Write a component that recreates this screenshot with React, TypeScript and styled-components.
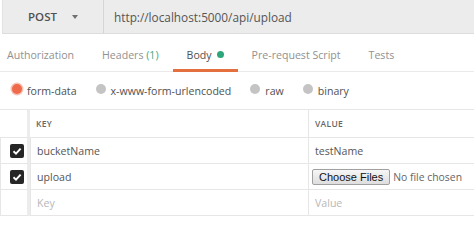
import styled, { createGlobalStyle } from 'styled-components';

const GlobalStyle = createGlobalStyle`
  body {
    margin: 0;
    background: #fff;
    font-family: 'Open Sans', 'Liberation Sans', sans-serif;
  }
`;

const Page = styled.div`
  width: 474px;
  height: 222px;
  overflow: hidden;
  background: #fff;
`;

const TopBar = styled.div`
  display: flex;
  height: 33px;
  margin-left: 2px;
  background: #ececec;
  border-bottom: 1px solid #dcdcdc;
  border-left: 1px solid #e2e2e2;
`;

const MethodSelect = styled.div`
  width: 101px;
  display: flex;
  align-items: center;
  justify-content: center;
  gap: 15px;
  border-right: 1px solid #d6d6d6;
  font-size: 11.5px;
  font-weight: 600;
  color: #505050;
  box-sizing: border-box;
`;

const Caret = styled.span`
  width: 0;
  height: 0;
  border-left: 3.5px solid transparent;
  border-right: 3.5px solid transparent;
  border-top: 4px solid #707070;
`;

const UrlField = styled.div`
  flex: 1;
  display: flex;
  align-items: center;
  padding-left: 10px;
  font-size: 11.8px;
  color: #555;
`;

const Tabs = styled.div`
  display: flex;
  height: 37px;
  margin-left: -7px;
  border-bottom: 1px solid #eaeaea;
`;

const Tab = styled.div<{ $active?: boolean }>`
  display: flex;
  align-items: center;
  gap: 5px;
  padding: 6px 14px 0;
  font-size: 10.6px;
  color: ${(p) => (p.$active ? '#505050' : '#919191')};
  border-bottom: 3px solid ${(p) => (p.$active ? '#e4703f' : 'transparent')};
  margin-bottom: -1px;
`;

const Count = styled.span`
  color: #45a783;
`;

const Dot = styled.span`
  width: 7px;
  height: 7px;
  border-radius: 50%;
  background: #2fa57c;
`;

const BodyTypes = styled.div`
  display: flex;
  align-items: center;
  height: 37px;
  padding-left: 12px;
  gap: 19px;
  border-bottom: 1px solid #e6e6e6;
`;

const Radio = styled.label<{ $checked?: boolean }>`
  display: flex;
  align-items: center;
  gap: 5px;
  font-size: 10.6px;
  color: #505050;

  &::before {
    content: '';
    width: 10px;
    height: 10px;
    border-radius: 50%;
    margin-bottom: 3px;
    background: ${(p) => (p.$checked ? '#ef6a4a' : '#c4c4c4')};
    box-shadow: ${(p) => (p.$checked ? '0 0 0 1.5px #f6c2b4' : 'none')};
  }
`;

const Grid = styled.div`
  display: grid;
  grid-template-columns: 30px 278px 1fr;
  grid-auto-rows: 26px;
  grid-template-rows: 28px;
`;

const Cell = styled.div<{ $first?: boolean }>`
  display: flex;
  align-items: center;
  padding-left: ${(p) => (p.$first ? '0' : '6px')};
  justify-content: ${(p) => (p.$first ? 'center' : 'flex-start')};
  border-bottom: 1px solid #e6e6e6;
  border-right: ${(p) => (p.$first ? '3px solid #ececec' : 'none')};
  font-size: 10.6px;
  color: #555;
  min-width: 0;
  white-space: nowrap;

  & + & + & {
    border-left: 1px solid #e6e6e6;
  }
`;

const HeadCell = styled(Cell)`
  font-size: 8.5px;
  font-weight: 600;
  color: #666;
  letter-spacing: 0.3px;
`;

const Placeholder = styled.span`
  color: #b8b8b8;
`;

const Check = styled.span`
  width: 14px;
  height: 14px;
  border-radius: 2px;
  background: #262626;
  display: flex;
  align-items: center;
  justify-content: center;
  margin-left: 6px;
`;

const FileButton = styled.span`
  font-family: 'Liberation Sans', Arial, sans-serif;
  font-size: 11px;
  color: #111;
  padding: 0 6px;
  height: 14px;
  line-height: 14px;
  border: 1px solid #a0a0a0;
  border-radius: 2px;
  background: linear-gradient(#f6f6f6, #dedede);
  margin-left: -3px;
`;

const FileNote = styled.span`
  margin-left: 3px;
  font-size: 10.4px;
  color: #666;
`;

const CheckBox = () => (
  <Check>
    <svg width='10' height='10' viewBox='0 0 10 10'>
      <path d='M1.5 5.2 L4 7.6 L8.6 2.6' stroke='#fff' strokeWidth='1.9' fill='none' />
    </svg>
  </Check>
);

const App = () => (
  <Page>
    <GlobalStyle />
    <TopBar>
      <MethodSelect>
        POST
        <Caret />
      </MethodSelect>
      <UrlField>http://localhost:5000/api/upload</UrlField>
    </TopBar>
    <Tabs>
      <Tab>Authorization</Tab>
      <Tab>
        <span>
          Headers <Count>(1)</Count>
        </span>
      </Tab>
      <Tab $active>
        Body
        <Dot />
      </Tab>
      <Tab>Pre-request Script</Tab>
      <Tab>Tests</Tab>
    </Tabs>
    <BodyTypes>
      <Radio $checked>form-data</Radio>
      <Radio>x-www-form-urlencoded</Radio>
      <Radio>raw</Radio>
      <Radio>binary</Radio>
    </BodyTypes>
    <Grid>
      <HeadCell $first />
      <HeadCell>KEY</HeadCell>
      <HeadCell>VALUE</HeadCell>

      <Cell $first>
        <CheckBox />
      </Cell>
      <Cell>bucketName</Cell>
      <Cell>testName</Cell>

      <Cell $first>
        <CheckBox />
      </Cell>
      <Cell>upload</Cell>
      <Cell>
        <FileButton>Choose Files</FileButton>
        <FileNote>No file chosen</FileNote>
      </Cell>

      <Cell $first />
      <Cell>
        <Placeholder>Key</Placeholder>
      </Cell>
      <Cell>
        <Placeholder>Value</Placeholder>
      </Cell>
    </Grid>
  </Page>
);

export default App;
